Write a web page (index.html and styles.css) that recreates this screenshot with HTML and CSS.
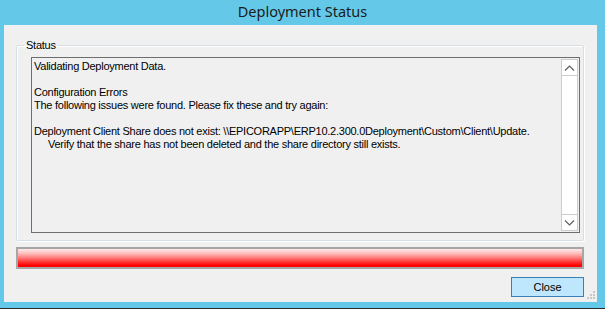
FILE: index.html
```html
<!DOCTYPE html>
<html>
  <head>
    <meta charset="UTF-8">
    <title>Deployment Status</title>
    <link rel="stylesheet" href="styles.css">
  </head>
  <body>
    <div class="window">
      <div class="titlebar">Deployment Status</div>
      <div class="client">
        <fieldset class="group">
          <legend>Status</legend>
          <div class="textbox">
            <div class="text">
              <div>Validating Deployment Data.</div>
              <div>&nbsp;</div>
              <div>Configuration Errors</div>
              <div>The following issues were found. Please fix these and try again:</div>
              <div>&nbsp;</div>
              <div>Deployment Client Share does not exist: \\EPICORAPP\ERP10.2.300.0Deployment\Custom\Client\Update.</div>
              <div class="indent">Verify that the share has not been deleted and the share directory still exists.</div>
            </div>
            <div class="scrollbar">
              <div class="arrow">
                <svg width="11" height="6" viewBox="0 0 11 6"><path d="M1 5.5 L5.5 1 L10 5.5" fill="none" stroke="#606060" stroke-width="1.2"/></svg>
              </div>
              <div class="track"></div>
              <div class="arrow">
                <svg width="11" height="6" viewBox="0 0 11 6"><path d="M1 0.5 L5.5 5 L10 0.5" fill="none" stroke="#606060" stroke-width="1.2"/></svg>
              </div>
            </div>
          </div>
        </fieldset>
        <div class="progress"></div>
        <div class="actions">
          <button>Close</button>
        </div>
        <svg class="grip" width="8" height="8" viewBox="0 0 8 8">
          <rect x="6" y="0" width="2" height="2" fill="#c8c8c8"/>
          <rect x="3" y="3" width="2" height="2" fill="#c8c8c8"/>
          <rect x="6" y="3" width="2" height="2" fill="#c8c8c8"/>
          <rect x="0" y="6" width="2" height="2" fill="#c8c8c8"/>
          <rect x="3" y="6" width="2" height="2" fill="#c8c8c8"/>
          <rect x="6" y="6" width="2" height="2" fill="#c8c8c8"/>
        </svg>
      </div>
    </div>
    <div class="edge"></div>
  </body>
</html>
```

FILE: styles.css
```css
html, body {
  margin: 0;
  height: 311px;
  overflow: hidden;
}

body {
  background: #ffffff;
  font: 11px "Liberation Sans", Arial, sans-serif;
  letter-spacing: -0.25px;
  color: #000;
}

.window {
  background: #64c9e9;
  height: 308px;
  display: flex;
  flex-direction: column;
}

.titlebar {
  height: 25px;
  text-align: center;
  font: 14.5px "Noto Sans", "Open Sans", sans-serif;
  letter-spacing: 0;
  line-height: 22px;
  color: #1b1b1b;
}

.client {
  position: relative;
  margin: 0 8px 0 4px;
  height: 277px;
  background: #f0f0f0;
  display: flex;
  flex-direction: column;
}

.group {
  margin: 14px 13px 0 12px;
  padding: 6px 3px 7px 14px;
  border: 1px solid #d5dfe5;
  box-shadow: inset 1px 1px #fff, 1px 1px #fff;
  border-radius: 2px;
}
.group legend {
  margin-left: -7px;
  padding: 0 2px;
  line-height: 12px;
}

.textbox {
  height: 174px;
  border: 1px solid #6e6e6e;
  background: #f0f0f0;
  display: flex;
}

.text {
  flex-grow: 1;
  padding: 2px 2px;
  line-height: 13px;
  white-space: nowrap;
  overflow: hidden;
}
.indent {
  padding-left: 14px;
}

.scrollbar {
  width: 17px;
  margin: 1px 1px 1px 0;
  display: flex;
  flex-direction: column;
  background: #fff;
}
.arrow {
  height: 15px;
  border: 1px solid #cdcdcd;
  display: flex;
  align-items: center;
  justify-content: center;
  background: #fff;
}
.track {
  flex-grow: 1;
  border-left: 1px solid #cdcdcd;
  border-right: 1px solid #cdcdcd;
}

.progress {
  margin: 6px 13px 0 12px;
  height: 18px;
  border: 2px solid #a6a6a6;
  background: linear-gradient(#ffe8e8, #ffc4c4 22%, #ff7e7e 48%, #ff2c2c 75%, #ff0000 92%);
}

.actions {
  display: flex;
  justify-content: flex-end;
  margin: 8px 13px 0 0;
}
.actions button {
  width: 73px;
  height: 20px;
  padding: 0;
  font: 11px "Liberation Sans", Arial, sans-serif;
  color: #000;
  background: #bee6fd;
  border: 1px solid #3c7fb1;
  border-radius: 0;
}

.grip {
  position: absolute;
  right: 2px;
  bottom: 3px;
}

.edge {
  height: 1px;
  background: #2b2b2b;
}
```
